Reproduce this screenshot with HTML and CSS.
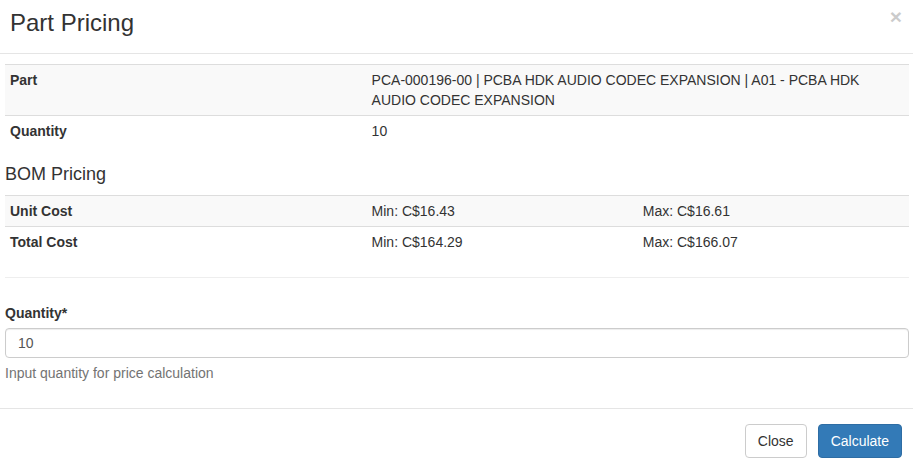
FILE: index.html
```html
<!DOCTYPE html>
<html lang="en">
<head>
<meta charset="utf-8">
<title>Part Pricing</title>
<link rel="stylesheet" href="styles.css">
</head>
<body>
<div class="modal">
  <div class="modal-header">
    <h4 class="modal-title">Part Pricing</h4>
    <button type="button" class="close" aria-label="Close">&times;</button>
  </div>
  <div class="modal-body">
    <table class="table">
      <tbody>
        <tr class="odd">
          <th class="col-label">Part</th>
          <td>PCA-000196-00 | PCBA HDK AUDIO CODEC EXPANSION | A01 - PCBA HDK AUDIO CODEC EXPANSION</td>
        </tr>
        <tr>
          <th class="col-label">Quantity</th>
          <td>10</td>
        </tr>
      </tbody>
    </table>
    <h4 class="section-title">BOM Pricing</h4>
    <table class="table">
      <tbody>
        <tr class="odd">
          <th class="col-label">Unit Cost</th>
          <td class="col-third">Min: C$16.43</td>
          <td class="col-third">Max: C$16.61</td>
        </tr>
        <tr>
          <th class="col-label">Total Cost</th>
          <td class="col-third">Min: C$164.29</td>
          <td class="col-third">Max: C$166.07</td>
        </tr>
      </tbody>
    </table>
    <hr class="divider">
    <div class="form-group">
      <label class="control-label" for="qty">Quantity*</label>
      <input class="form-control" id="qty" type="text" value="10">
      <p class="help-block">Input quantity for price calculation</p>
    </div>
  </div>
  <div class="modal-footer">
    <button type="button" class="btn btn-default">Close</button>
    <button type="button" class="btn btn-primary">Calculate</button>
  </div>
</div>
</body>
</html>
```
FILE: styles.css
```css
* { box-sizing: border-box; }
html, body {
  margin: 0;
  padding: 0;
  background: #fff;
}
body {
  font-family: "Liberation Sans", Arial, Helvetica, sans-serif;
  font-size: 14px;
  line-height: 20px;
  color: #333;
  width: 913px;
  height: 462px;
  overflow: hidden;
}
.modal {
  background: #fff;
}
.modal-header {
  display: flex;
  justify-content: space-between;
  align-items: flex-start;
  padding: 10px 11px 17px 10px;
  border-bottom: 1px solid #e5e5e5;
}
.modal-title {
  margin: 0;
  font-size: 24px;
  font-weight: normal;
  line-height: 26px;
}
.close {
  margin: 0;
  padding: 0;
  border: 0;
  background: transparent;
  font-family: "Liberation Sans", Arial, sans-serif;
  font-size: 21px;
  font-weight: bold;
  line-height: 1;
  color: #000;
  opacity: 0.2;
  cursor: pointer;
  margin-top: -4px;
}
.modal-body {
  padding: 10px 4px 0 5px;
}
.table {
  width: 100%;
  border-collapse: collapse;
  border-spacing: 0;
  margin-bottom: 20px;
}
.table th,
.table td {
  padding: 5px;
  text-align: left;
  vertical-align: top;
  border-top: 1px solid #ddd;
  line-height: 20px;
}
.table th { font-weight: bold; }
.table .odd th,
.table .odd td { background: #f9f9f9; }
.col-label { width: 40%; }
.col-third { width: 30%; }
.section-title {
  margin: -2px 0 11px;
  font-size: 18px;
  font-weight: normal;
  line-height: 20px;
}
.divider {
  margin: 0 0 25px;
  border: 0;
  border-top: 1px solid #eee;
  height: 0;
}
.form-group {
  padding-bottom: 25px;
}
.control-label {
  display: block;
  font-weight: bold;
  margin-bottom: 5px;
}
.form-control {
  display: block;
  width: 100%;
  height: 30px;
  padding: 4px 12px;
  font-family: inherit;
  font-size: 14px;
  line-height: 20px;
  color: #555;
  background: #fff;
  border: 1px solid #ccc;
  border-radius: 4px;
  box-shadow: inset 0 1px 1px rgba(0,0,0,.075);
}
.help-block {
  margin: 5px 0 0;
  color: #737373;
}
.modal-footer {
  display: flex;
  justify-content: flex-end;
  gap: 11px;
  padding: 15px 11px 15px 15px;
  border-top: 1px solid #e5e5e5;
}
.btn {
  display: inline-block;
  padding: 6px 12px;
  font-family: inherit;
  font-size: 14px;
  line-height: 20px;
  border: 1px solid transparent;
  border-radius: 4px;
  cursor: pointer;
}
.btn-default {
  color: #333;
  background: #fff;
  border-color: #ccc;
}
.btn-primary {
  color: #fff;
  background: #337ab7;
  border-color: #2e6da4;
}
```
